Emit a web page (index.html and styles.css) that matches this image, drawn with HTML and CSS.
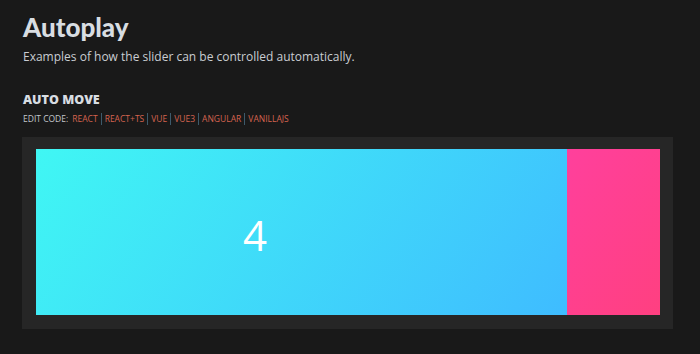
FILE: index.html
```html
<!DOCTYPE html>
<html lang="en">
<head>
  <meta charset="UTF-8">
  <meta name="viewport" content="width=device-width, initial-scale=1.0">
  <title>Autoplay</title>
  <link rel="stylesheet" href="styles.css">
</head>
<body>
  <div class="page">
    <h1>Autoplay</h1>
    <p class="intro">Examples of how the slider can be controlled automatically.</p>

    <h2>Auto Move</h2>
    <div class="edit-code">
      <span class="label">Edit code:</span>
      <a href="#">React</a>
      <a href="#">React+TS</a>
      <a href="#">Vue</a>
      <a href="#">Vue3</a>
      <a href="#">Angular</a>
      <a href="#">VanillaJS</a>
    </div>

    <div class="example">
      <div class="keen-slider">
        <div class="track">
          <div class="slide number-slide4">4</div>
          <div class="slide number-slide5"></div>
        </div>
      </div>
    </div>
  </div>
</body>
</html>
```

FILE: styles.css
```css
body {
  margin: 0;
  background-color: #191919;
  color: #d6dbe0;
  font-family: 'Open Sans', sans-serif;
}

.page {
  padding: 10px 27px 0 22px;
}

h1 {
  margin: 0;
  padding-left: 1px;
  font-family: 'Lato', sans-serif;
  font-size: 26px;
  font-weight: 900;
  line-height: 34px;
  color: #d8dde2;
}

.intro {
  margin: 4px 0 0 1px;
  font-size: 12px;
  line-height: 18px;
  color: #c9cdd2;
}

h2 {
  margin: 26px 0 0 1px;
  font-size: 12.5px;
  font-weight: 800;
  line-height: 16px;
  text-transform: uppercase;
  color: #d8dde2;
}

.edit-code {
  margin: 5px 0 0 1px;
  display: flex;
  align-items: center;
  font-size: 8.5px;
  line-height: 12px;
  text-transform: uppercase;
}

.edit-code .label {
  color: #c3c7cc;
  margin-right: 4px;
}

.edit-code a {
  color: #d5634f;
  text-decoration: none;
  padding: 0 3px;
  border-left: 1px solid #3d5a6b;
}

.edit-code .label + a {
  border-left: none;
  padding-left: 0;
}

.example {
  margin-top: 12px;
  background-color: #262626;
  padding: 12px 13px 14px 14px;
}

.keen-slider {
  overflow: hidden;
  height: 166px;
}

.track {
  display: flex;
  height: 100%;
  transform: translateX(-93px);
}

.slide {
  flex: 0 0 100%;
  display: flex;
  align-items: center;
  justify-content: center;
  padding-top: 4px;
  box-sizing: border-box;
  font-size: 42px;
  font-weight: 400;
  color: #fff;
}

.number-slide4 {
  background: linear-gradient(128deg, rgb(64, 255, 242) 0%, rgb(63, 188, 255) 100%);
}

.number-slide5 {
  background: linear-gradient(128deg, rgb(255, 64, 156) 0%, rgb(255, 63, 63) 100%);
}
```
